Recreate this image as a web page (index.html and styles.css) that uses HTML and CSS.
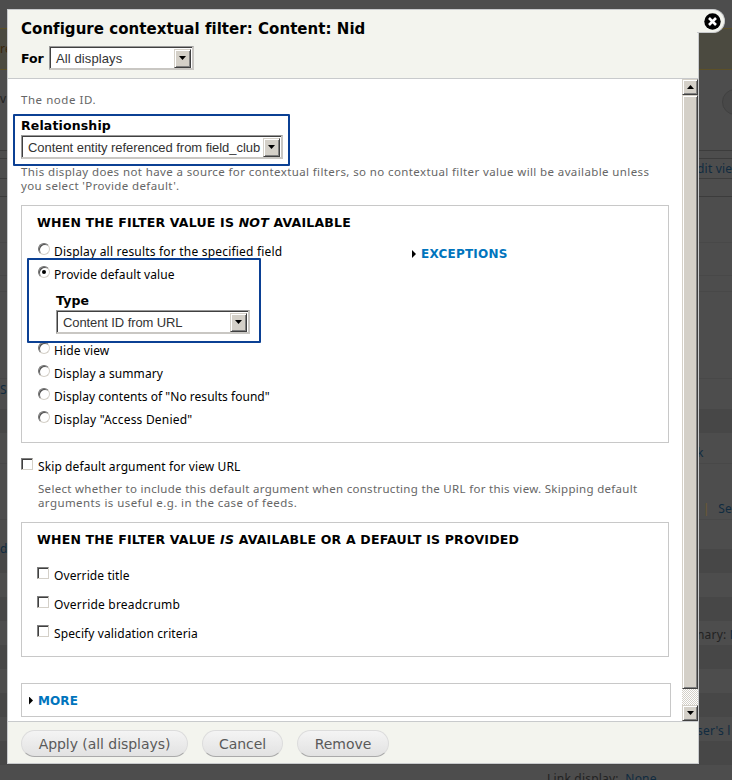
FILE: index.html
```html
<!DOCTYPE html>
<html lang="en">
<head>
<meta charset="utf-8">
<title>Configure contextual filter: Content: Nid</title>
<link rel="stylesheet" href="styles.css">
</head>
<body>
<div class="backdrop" aria-hidden="true">
  <div class="strip h28"></div>
  <div class="strip h42 warn"><span>re</span></div>
  <div class="strip h80 tall"><span>v</span><i class="knob"></i></div>
  <div class="strip h8 line"></div>
  <div class="strip h21 line"><span></span><b class="link view-link">dit view</b></div>
  <div class="strip h18 line"></div>
  <div class="strip h46 line"></div>
  <div class="strip h33 faint"></div>
  <div class="strip h16 faint"></div>
  <div class="strip h87 faint"></div>
  <div class="strip h31 faint raised"><span class="link">Se</span></div>
  <div class="strip h24 dark"></div>
  <div class="strip h30 lowered"><span></span><b class="link">k</b></div>
  <div class="strip h26 faint"></div>
  <div class="strip h30 sets lowered"><span></span><b><em>|</em> <u class="link">Set</u></b></div>
  <div class="strip h30 faint overhang"><span class="link">d</span></div>
  <div class="strip h24 dark"></div>
  <div class="strip h24"></div>
  <div class="strip h24 dark"></div>
  <div class="strip h24 nudged"><span></span><b>nary: <u class="link">N</u></b></div>
  <div class="strip h24 dark"></div>
  <div class="strip h24"></div>
  <div class="strip h24 dark"></div>
  <div class="strip h24 nudged"><span></span><b class="link">ser's l</b></div>
  <div class="strip h24 dark"></div>
  <div class="strip h24 last nudged"><span></span><b>Link display: &nbsp;<u class="link">None</u></b></div>
</div>

<div class="dialog">
  <div class="close">
    <svg width="18" height="18" viewBox="0 0 18 18"><circle cx="8.5" cy="8.5" r="8.2"/><path d="M5 5l7 7M12 5l-7 7" stroke="#fff" stroke-width="2.6"/></svg>
  </div>
  <header class="head">
    <h1><span class="t-title">Configure contextual filter: Content: Nid</span></h1>
    <div class="for"><b class="t-for">For</b>
      <div class="select s-for"><span>All displays</span><i class="drop"></i></div>
    </div>
  </header>

  <div class="middle">
    <main class="content">
      <p class="hint node">The node ID.</p>
      <h2 class="label rel"><span>Relationship</span></h2>
      <div class="select s-rel"><span>Content entity referenced from field_club</span><i class="drop"></i></div>
      <p class="hint source">This display does not have a source for contextual filters, so no contextual filter value will be available unless<br>you select 'Provide default'.</p>

      <section class="fieldset first">
        <h3><span class="t-not">WHEN THE FILTER VALUE IS <em>NOT</em> AVAILABLE</span></h3>
        <div class="cols">
          <div class="options">
            <label class="opt"><i class="radio"></i><span class="wide">Display all results for the specified field</span></label>
            <label class="opt"><i class="radio on"></i><span>Provide default value</span></label>
            <div class="sub">
              <h2 class="label"><span>Type</span></h2>
              <div class="select s-type"><span>Content ID from URL</span><i class="drop"></i></div>
            </div>
            <label class="opt"><i class="radio"></i><span>Hide view</span></label>
            <label class="opt"><i class="radio"></i><span>Display a summary</span></label>
            <label class="opt"><i class="radio"></i><span class="tight">Display contents of "No results found"</span></label>
            <label class="opt"><i class="radio"></i><span class="wide">Display "Access Denied"</span></label>
          </div>
          <div class="toggle exceptions"><i class="tri"></i><span>EXCEPTIONS</span></div>
        </div>
        <div class="callout c-type"></div>
      </section>

      <label class="opt skip"><i class="check"></i><span>Skip default argument for view URL</span></label>
      <p class="hint skip-hint">Select whether to include this default argument when constructing the URL for this view. Skipping default<br><span class="second-line">arguments is useful e.g. in the case of feeds.</span></p>

      <section class="fieldset second">
        <h3><span class="t-is">WHEN THE FILTER VALUE <em>IS</em> AVAILABLE OR A DEFAULT IS PROVIDED</span></h3>
        <label class="opt"><i class="check"></i><span>Override title</span></label>
        <label class="opt"><i class="check"></i><span class="wide">Override breadcrumb</span></label>
        <label class="opt"><i class="check"></i><span>Specify validation criteria</span></label>
      </section>

      <section class="fieldset more toggle"><i class="tri"></i><span>MORE</span></section>
      <div class="callout c-rel"></div>
    </main>
    <div class="scrollbar">
      <div class="sb-btn up"></div>
      <div class="thumb"></div>
      <div class="track"></div>
      <div class="sb-btn down"></div>
    </div>
  </div>

  <footer class="foot">
    <button class="b1">Apply (all displays)</button>
    <button class="b2">Cancel</button>
    <button class="b3">Remove</button>
  </footer>
</div>
</body>
</html>
```
FILE: styles.css
```css
* { box-sizing: border-box; }
html, body { margin: 0; height: 780px; overflow: hidden; }
body {
  position: relative;
  width: 732px;
  background: #4d4d4d;
  font: 12px/20px "Noto Sans", sans-serif;
  letter-spacing: 0.1px;
  color: #000;
}
h1, h2, h3, p { margin: 0; font-size: 12px; }
h1, h2, h3, .for b, .toggle { font-family: "DejaVu Sans", sans-serif; }

/* dimmed page behind the dialog */
.backdrop { position: absolute; inset: 0; overflow: hidden; color: #222; letter-spacing: 0.2px; }
.strip { display: flex; align-items: center; white-space: nowrap; }
.strip span { flex: 0 0 697px; }
.strip b { font-weight: 400; }
.strip u { text-decoration: none; }
.strip em { color: #6e5a30; font-style: normal; margin: 0 5px 0 6px; }
.strip .link { color: #102b40; }
.h8 { height: 8px; } .h16 { height: 16px; } .h18 { height: 18px; }
.h21 { height: 20px; } .h24 { height: 24px; } .h26 { height: 26px; } .h28 { height: 28px; }
.h30 { height: 30px; } .h31 { height: 31px; } .h33 { height: 33px; } .h42 { height: 42px; }
.h46 { height: 46px; } .h80 { height: 80px; } .h87 { height: 87px; }
.warn { background: #4b4a40; border: solid #5c5027; border-width: 1px 0; color: #3a2508; }
.tall { align-items: flex-start; padding-top: 19px; }
.raised { padding-bottom: 8px; }
.lowered { padding-top: 9px; }
.nudged { padding-top: 4px; }
.overhang { align-items: flex-start; padding-top: 19px; }
.knob { flex: none; width: 30px; height: 26px; margin-left: 25px; border: 1px solid #404040; border-radius: 13px; background: #484848; }
.line { border-top: 1px solid #3c3c3c; }
.faint { border-top: 1px solid #484848; }
.dark { background: #474747; }
.last span { flex-basis: 547px; }

.dialog {
  position: absolute;
  left: 7px; top: 9px;
  width: 692px; height: 755px;
  display: flex; flex-direction: column;
  border: 1px solid #c8cacc;
  background: #fff;
}
.close {
  position: absolute;
  left: 689px; top: -1px;
  width: 28px; height: 24px;
  border: 1px solid #c8cacc; border-left: 0;
  border-radius: 0 12px 12px 0;
  background: #f3f4ee;
}
.close svg { position: absolute; left: 6.5px; top: 3px; }
.head { height: 69px; background: #f3f4ee; border-bottom: 1px solid #c8cacc; padding: 8px 0 0 13px; flex: none; }
.head h1 { height: 22px; font-size: 15px; line-height: 22px; }
.t-title { letter-spacing: 0.04px; }
.for { display: flex; margin-top: 6px; height: 24px; }
.for b { width: 28px; line-height: 25px; font-size: 12.5px; letter-spacing: 0; }

.select {
  display: flex; justify-content: space-between;
  height: 24px;
  border: 2px solid #c9c7c3;
  border-top: 1px solid #999; border-left: 1px solid #999;
  box-shadow: inset 1px 1px 0 #404040;
  background: #fff;
  font: 13px/21px "Liberation Sans", sans-serif;
  letter-spacing: -0.05px;
  color: #333;
  padding: 1px 1px 0 6px;
  white-space: nowrap;
}
.drop {
  position: relative;
  width: 17px; height: 19px; margin-top: 1px;
  background: #d4d0c8;
  border: 1px solid; border-color: #d4d0c8 #404040 #404040 #d4d0c8;
  box-shadow: inset 1px 1px 0 #fff, inset -1px -1px 0 #808080;
}
.drop::after {
  content: ""; position: absolute; left: 4px; top: 6px;
  width: 7px; height: 4px; background: #000;
  clip-path: polygon(0 0, 100% 0, 50% 100%);
}
.s-for { width: 145px; }
.s-for span { letter-spacing: 0.1px; }
.s-rel { width: 262px; }
.s-type { width: 194px; letter-spacing: -0.1px; }

.middle { display: flex; height: 642px; flex: none; }
.content { position: relative; width: 674px; padding: 11px 0 0 13px; }
.hint { color: #666; line-height: 14px; font-size: 11.5px; white-space: nowrap; }
.node { height: 20px; line-height: 20px; letter-spacing: 0.55px; }
.label { font-size: 12.5px; line-height: 17px; height: 18px; letter-spacing: 0.15px; }
.rel { margin-top: 7px; }
.source { margin-top: 6px; height: 28px; letter-spacing: 0.39px; }
.fieldset { position: relative; border: 1px solid #c8c8c8; width: 648px; }
.fieldset h3 { font-size: 12.5px; line-height: 18px; height: 18px; padding-left: 15px; white-space: nowrap; }
.t-not { letter-spacing: 0.2px; }
.t-is { letter-spacing: 0.2px; }
.first { margin-top: 12px; height: 238px; padding-top: 8px; }
.cols { display: flex; margin-top: 9px; }
.options { width: 390px; padding-left: 15px; }
.options .opt { line-height: 22px; }
.opt { display: flex; height: 23px; line-height: 23px; white-space: nowrap; }
.opt span { margin-left: 5px; }
.opt .wide { letter-spacing: 0.2px; }
.opt .tight { letter-spacing: 0.03px; }
.radio { position: relative; width: 12px; height: 12px; margin: 1.5px -0.5px 0 0.5px; border: 1px solid; border-color: #707070 #d4d0c8 #d4d0c8 #707070; border-radius: 50%; box-shadow: inset 1px 1px 0 #505050; }
.radio.on::after { content: ""; position: absolute; left: 3px; top: 3px; width: 4px; height: 4px; border-radius: 50%; background: #000; }
.check { width: 12px; height: 12px; margin-top: 3px; border: 1px solid; border-color: #808080 #d4d0c8 #d4d0c8 #808080; box-shadow: inset 1px 1px 0 #404040; }
.sub { padding: 5px 0 0 19px; height: 53px; }
.toggle { display: flex; align-items: center; color: #0074bd; font-weight: 700; }
.tri { width: 4px; height: 8px; background: #000; clip-path: polygon(0 0, 100% 50%, 0 100%); margin-right: 5px; }
.exceptions { height: 24px; margin-top: 1px; font-size: 12px; letter-spacing: 0.22px; }
.callout { position: absolute; border: 2px solid #0b4094; border-radius: 1px; }
.c-rel { left: 5px; top: 35px; width: 277px; height: 52px; }
.c-type { left: 5px; top: 52px; width: 234px; height: 85px; }
.skip { margin-top: 12px; }
.skip-hint { margin: 4px 0 0 17px; height: 28px; letter-spacing: 0.3px; }
.second-line { letter-spacing: 0.42px; }
.second { margin-top: 12px; height: 135px; padding-top: 8px; }
.second .opt { margin: 0 0 6px 15px; }
.second h3 + .opt { margin-top: 15px; }
.more { margin-top: 26px; width: 650px; height: 34px; padding: 1px 0 0 7px; font-size: 12px; letter-spacing: 0.1px; }

.scrollbar { width: 16px; display: flex; flex-direction: column; }
.sb-btn, .thumb { background: #d4d0c8; border: 1px solid; border-color: #d4d0c8 #404040 #404040 #d4d0c8; box-shadow: inset 1px 1px 0 #fff, inset -1px -1px 0 #808080; }
.sb-btn { position: relative; height: 16px; }
.sb-btn::after { content: ""; position: absolute; left: 4px; top: 5px; width: 7px; height: 4px; background: #000; }
.up::after { clip-path: polygon(50% 0, 100% 100%, 0 100%); }
.down::after { clip-path: polygon(0 0, 100% 0, 50% 100%); }
.thumb { height: 594px; }
.track { height: 16px; background: repeating-conic-gradient(#d4d0c8 0 25%, #fff 0 50%) 0 0 / 2px 2px; }

.foot { flex: 1; display: flex; gap: 14px; padding: 8px 0 0 13px; background: #f3f4ee; border-top: 1px solid #c8cacc; }
.foot button {
  height: 27px; padding: 0;
  border: 1px solid #dcdcdc; border-bottom-color: #aaa; border-radius: 14px;
  background: linear-gradient(#f4f4f4, #e2e2e2);
  font: 14px/24px "DejaVu Sans", sans-serif;
  letter-spacing: -0.05px;
  color: #5a5a5a;
  white-space: nowrap;
}
.b1 { width: 167px; } .b2 { width: 81px; } .b3 { width: 92px; }
```
